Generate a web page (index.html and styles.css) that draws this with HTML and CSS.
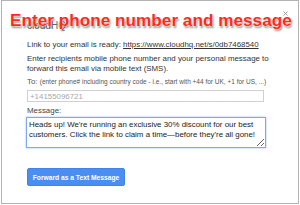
FILE: index.html
```html
<!DOCTYPE html>
<html>
<head>
<meta charset="utf-8">
<link rel="stylesheet" href="styles.css">
</head>
<body>
<div class="frame">
  <div class="dialog">
    <div class="brand">cloudHQ</div>
    <p class="ready">Link to your email is ready: <a class="link" href="#">https://www.cloudhq.net/s/0db7468540</a></p>
    <p class="intro">Enter recipients mobile phone number and your personal message to forward this email via mobile text (SMS).</p>
    <label class="to">To: <span class="hint">(enter phone# including country code - i.e., start with +44 for UK, +1 for US, ...)</span></label>
    <input class="phone" type="text" placeholder="+14155096721">
    <label class="msg-label">Message:</label>
    <textarea class="msg">Heads up! We're running an exclusive 30% discount for our best customers. Click the link to claim a time—before they're all gone!</textarea>
    <button class="send">Forward as a Text Message</button>
  </div>
  <svg class="close" width="5" height="5" viewBox="0 0 5 5"><path d="M0.5 0.5L4.5 4.5M4.5 0.5L0.5 4.5" stroke="#9a9a9a" stroke-width="1"/></svg>
  <h1 class="callout">Enter phone number and message</h1>
</div>
</body>
</html>
```
FILE: styles.css
```css
html, body {
  margin: 0;
  padding: 0;
  background: #fff;
}
body {
  width: 300px;
  height: 205px;
  overflow: hidden;
  font-family: "Liberation Sans", Arial, sans-serif;
  color: #333;
}
.frame {
  position: relative;
  margin: 0 1px;
  height: 204px;
  box-sizing: border-box;
  border: 1px solid #b3b3b3;
}
.dialog {
  display: flex;
  flex-direction: column;
  align-items: flex-start;
  padding: 18.5px 0 0 25px;
  width: 245px;
}
.brand {
  font-size: 10px;
  line-height: 12px;
  color: #666;
}
.ready, .intro {
  margin: 0;
  font-size: 7.9px;
  line-height: 10px;
}
.ready {
  margin-top: 8.5px;
}
.intro {
  margin-top: 3.5px;
}
.link {
  color: #333;
  text-decoration: underline;
}
.to {
  margin-top: 3px;
  font-size: 7.9px;
  line-height: 10px;
  color: #555;
  white-space: nowrap;
}
.hint {
  font-size: 6.5px;
}
.phone {
  margin: 3.5px 0 0 0;
  width: 237px;
  height: 12px;
  box-sizing: border-box;
  border: 1px solid #d0d0d0;
  padding: 0 2px;
  font-family: "Liberation Sans", Arial, sans-serif;
  font-size: 7.9px;
  color: #333;
  outline: none;
}
.phone::placeholder {
  color: #a8a8a8;
}
.msg-label {
  margin-top: 3.5px;
  font-size: 7.9px;
  line-height: 10px;
  color: #444;
}
.msg {
  margin: 1px 0 0 -1px;
  width: 240px;
  height: 31px;
  box-sizing: border-box;
  border: 1px solid #7fa9ee;
  box-shadow: 0 0 2px #9cc0f7;
  padding: 2.5px 2px 0;
  font-family: "Liberation Sans", Arial, sans-serif;
  font-size: 7.9px;
  line-height: 9.5px;
  color: #222;
  overflow: hidden;
  outline: none;
}
.send {
  margin-top: 20.5px;
  width: 98px;
  height: 18px;
  padding: 0;
  border: 1px solid #4282ea;
  border-radius: 2px;
  background: #4b8ef1;
  color: #fff;
  font-family: "Liberation Sans", Arial, sans-serif;
  font-weight: bold;
  font-size: 6.7px;
}
.close {
  position: absolute;
  left: 281px;
  top: 10px;
}
.callout {
  position: absolute;
  left: 8px;
  top: 9px;
  margin: 0;
  font-size: 17.2px;
  line-height: 20px;
  font-weight: bold;
  color: #ff2a1a;
  white-space: nowrap;
  text-shadow: 0 0 1px #fff, 0 0 2px #fff, 1px 2px 2px rgba(0, 0, 0, 0.45);
}
```
